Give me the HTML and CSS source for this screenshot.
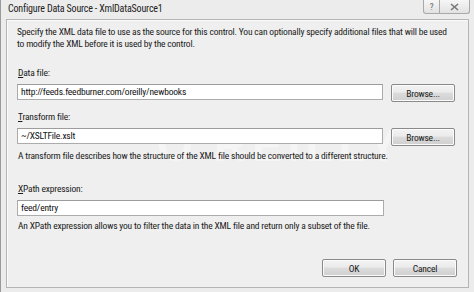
FILE: index.html
```html
<!DOCTYPE html>
<html>
<head>
<meta charset="utf-8">
<link rel="stylesheet" href="styles.css">
</head>
<body>
<div class="window">
  <div class="titlebar">
    <span class="title">Configure Data Source - XmlDataSource1</span>
    <div class="caption-btns">
      <span class="cbtn help">?</span>
      <span class="cbtn close">
        <svg width="9" height="8" viewBox="0 0 9 8"><path d="M1 1 L8 7 M8 1 L1 7" stroke="#777" stroke-width="1.6" fill="none"/></svg>
      </span>
    </div>
  </div>
  <div class="panel">
    <div class="watermark">O'REILLY</div>
    <p class="intro">Specify the XML data file to use as the source for this control. You can optionally specify additional files that will be used to modify the XML before it is used by the control.</p>
    <div class="field">
      <label class="lbl"><u>D</u>ata file:</label>
      <div class="row">
        <div class="input">http://feeds.feedburner.com/oreilly/newbooks</div>
        <button class="btn">Browse...</button>
      </div>
    </div>
    <div class="field">
      <label class="lbl"><u>T</u>ransform file:</label>
      <div class="row">
        <div class="input">~/XSLTFile.xslt</div>
        <button class="btn">Browse...</button>
      </div>
      <p class="desc">A transform file describes how the structure of the XML file should be converted to a different structure.</p>
    </div>
    <div class="field xpath">
      <label class="lbl"><u>X</u>Path expression:</label>
      <div class="row">
        <div class="input">feed/entry</div>
      </div>
      <p class="desc">An XPath expression allows you to filter the data in the XML file and return only a subset of the file.</p>
    </div>
    <div class="footer">
      <button class="btn">OK</button>
      <button class="btn">Cancel</button>
    </div>
  </div>
</div>
</body>
</html>
```

FILE: styles.css
```css
html, body {
  margin: 0;
  padding: 0;
  background: #e9e9e9;
}
body {
  width: 474px;
  height: 292px;
  overflow: hidden;
  font-family: "Roboto", "Noto Sans", sans-serif;
  font-stretch: condensed;
  font-size: 9.5px;
  letter-spacing: -0.18px;
  color: #1a1a1a;
}
.window {
  width: 474px;
  height: 292px;
  box-sizing: border-box;
  background: #ececec;
  border-left: 1px solid #9a9a9a;
  padding: 0 5px 4px 5px;
  display: flex;
  flex-direction: column;
}
.titlebar {
  height: 19px;
  display: flex;
  align-items: flex-start;
  justify-content: space-between;
  flex-shrink: 0;
}
.title {
  font-size: 10px;
  color: #222;
  padding: 3px 0 0 2px;
}
.caption-btns {
  display: flex;
  margin-right: -1px;
}
.cbtn {
  height: 13px;
  border: 1px solid #a9a9a9;
  border-top: none;
  background: linear-gradient(#f6f6f6, #e2e2e2);
  display: flex;
  align-items: center;
  justify-content: center;
  font-size: 9px;
  color: #666;
}
.help {
  width: 15px;
  border-radius: 0 0 0 3px;
}
.close {
  width: 29px;
  border-left: none;
  border-radius: 0 0 3px 0;
}
.panel {
  position: relative;
  flex: 1;
  background: #efefef;
  border: 1px solid #b4b4b4;
  box-shadow: inset 1px 1px 0 #fbfbfb;
  padding: 6px 13px 0 10px;
  display: flex;
  flex-direction: column;
  overflow: hidden;
}
.watermark {
  position: absolute;
  left: 150px;
  top: 98px;
  font-family: "Liberation Sans", sans-serif;
  font-stretch: 100%;
  font-weight: bold;
  font-size: 46px;
  letter-spacing: 5px;
  color: rgba(255, 255, 255, 0.4);
  pointer-events: none;
}
.intro {
  margin: 0;
  line-height: 12px;
  position: relative;
}
.field {
  margin-top: 17px;
  position: relative;
}
.field + .field {
  margin-top: 9px;
}
.field.xpath {
  margin-top: 21px;
}
.lbl {
  display: block;
  line-height: 12px;
  margin-bottom: 5px;
  margin-left: 1px;
}
.lbl u {
  text-decoration-thickness: 1px;
  text-underline-offset: 1px;
}
.row {
  display: flex;
  align-items: flex-start;
  gap: 8px;
}
.input {
  width: 367px;
  height: 16px;
  box-sizing: border-box;
  background: #fff;
  border: 1px solid #acacac;
  border-top-color: #9c9c9c;
  padding: 0 3px;
  line-height: 14px;
  color: #111;
}
.btn {
  font-family: inherit;
  font-stretch: inherit;
  letter-spacing: inherit;
  font-size: 9.5px;
  color: #1a1a1a;
  width: 64px;
  height: 18px;
  padding: 0;
  border: 1px solid #8a8a8a;
  border-radius: 2px;
  background: linear-gradient(#f3f3f3 0%, #ebebeb 45%, #dcdcdc 50%, #cfcfcf 100%);
  box-shadow: inset 0 0 0 1px #fbfbfb;
}
.desc {
  margin: 4px 0 0 1px;
  line-height: 12px;
}
.footer {
  margin-top: auto;
  margin-bottom: 10px;
  display: flex;
  justify-content: flex-end;
  gap: 7px;
  margin-right: -2px;
}
```
